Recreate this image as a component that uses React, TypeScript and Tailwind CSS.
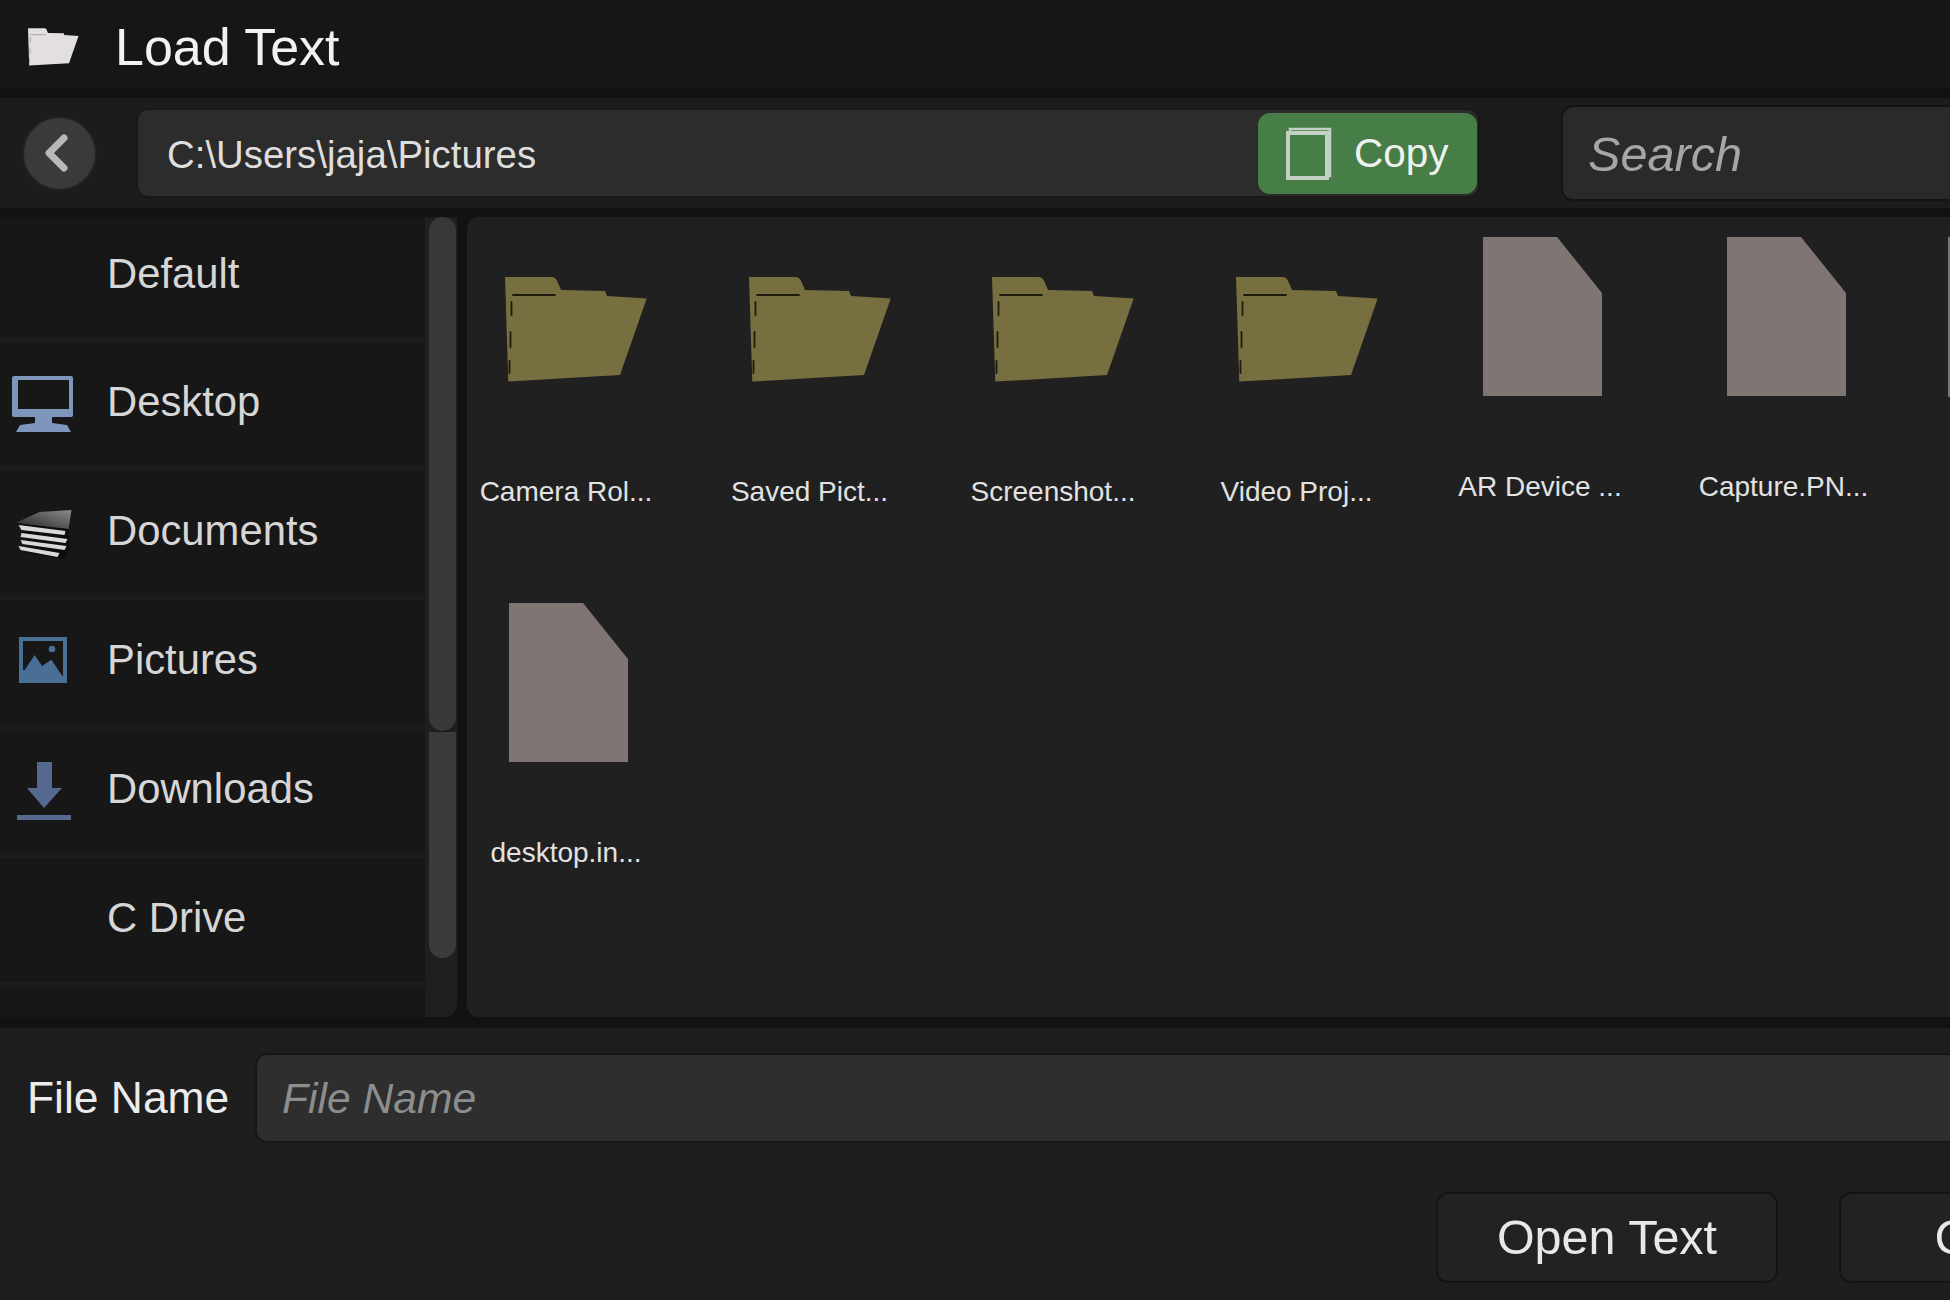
const places = [
  { name: 'Default', icon: null },
  { name: 'Desktop', icon: <DesktopIcon /> },
  { name: 'Documents', icon: <DocumentsIcon /> },
  { name: 'Pictures', icon: <PicturesIcon /> },
  { name: 'Downloads', icon: <DownloadsIcon /> },
  { name: 'C Drive', icon: null },
]

const files = [
  { name: 'Camera Rol...', kind: 'folder' },
  { name: 'Saved Pict...', kind: 'folder' },
  { name: 'Screenshot...', kind: 'folder' },
  { name: 'Video Proj...', kind: 'folder' },
  { name: 'AR Device ...', kind: 'doc' },
  { name: 'Capture.PN...', kind: 'doc' },
  { name: '', kind: 'wide' },
  { name: 'desktop.in...', kind: 'doc' },
]

function FolderShape({ fill, dash }: { fill: string; dash: string }) {
  return (
    <>
      <path d="M0 0H46.7C50 0 52 3 53 6L56 13L100 14L102 19L141.7 21.5L115 98L3.3 104.6Z" fill={fill} />
      <path d="M8 18H50M6.5 25V38M5.5 55V70M4.5 84V96" stroke={dash} strokeWidth="1.8" fill="none" strokeLinecap="round" />
    </>
  )
}

function FolderIcon() {
  return (
    <svg width="143" height="105" viewBox="0 0 143 105" className="ml-[38px] mt-[60px] block">
      <FolderShape fill="#786f41" dash="#1e1b0c" />
    </svg>
  )
}

function DocIcon() {
  return (
    <svg width="119" height="159" viewBox="0 0 119 159" className="ml-[42px] mt-[20px] block">
      <path d="M0 0H74L119 56V159H0Z" fill="#7f7674" />
    </svg>
  )
}

function DesktopIcon() {
  return (
    <svg width="61" height="56" viewBox="0 0 61 56" className="ml-[12px] mt-[3px]" fill="#7e96bb">
      <path fillRule="evenodd" d="M2 0H59A2 2 0 0 1 61 2V39A2 2 0 0 1 59 41H2A2 2 0 0 1 0 39V2A2 2 0 0 1 2 0ZM6 4V33H57V4Z" />
      <path d="M23 41H40V47L55 49L59 56H4L8 49L23 47Z" />
    </svg>
  )
}

function DocumentsIcon() {
  return (
    <svg width="62" height="50" viewBox="0 0 59 50" className="ml-[12px] mt-[5px]">
      <defs>
        <linearGradient id="stack-top" x1="0" y1="1" x2="1" y2="0">
          <stop offset="0" stopColor="#222222" />
          <stop offset="1" stopColor="#8c8c8c" />
        </linearGradient>
      </defs>
      <path d="M2 14L26 3L58 1L55 20L14 17Z" fill="url(#stack-top)" />
      <path d="M3 14L16 34L12 44L52 50L56 38L55 20Z" fill="#0d0d0d" />
      <path d="M5 16L52 22L51 26L8 21ZM8 24L54 30L52 34L7 28ZM7 31L53 37L51 41L9 35ZM5 37L46 44L44 48L7 41Z" fill="#d9d9d9" />
    </svg>
  )
}

function PicturesIcon() {
  return (
    <svg width="48" height="46" viewBox="0 0 48 46" className="ml-[19px]" fill="#4a6f96">
      <path fillRule="evenodd" d="M0 0H48V46H0ZM4 4V33H5.7L15.7 18L23 29L32.3 22.7L44 40V4Z" />
      <circle cx="33" cy="12" r="3.3" />
    </svg>
  )
}

function DownloadsIcon() {
  return (
    <svg width="54" height="58" viewBox="0 0 54 58" className="ml-[17px] mt-[4px]" fill="#55698f">
      <path d="M20 0H35V26H45L27 46L10 26H20Z" />
      <rect x="0" y="53" width="54" height="5" />
    </svg>
  )
}

function PlaceRow({ name, icon, first }: { name: string; icon: React.ReactNode; first: boolean }) {
  return (
    <div className={`relative flex items-center border-b-[5px] border-[#1c1c1c] text-[41.8px] text-[#d6d6d6] ${first ? 'h-[125px] pb-[6px]' : 'h-[129px] pb-[4px]'}`}>
      {icon && <span className="absolute left-0 flex items-center">{icon}</span>}
      <span className="ml-[107px]">{name}</span>
    </div>
  )
}

function FileCell({ name, kind }: { name: string; kind: string }) {
  return (
    <div className="h-[366px]">
      {kind === 'folder' && <FolderIcon />}
      {kind === 'doc' && <DocIcon />}
      {kind === 'wide' && <div className="ml-[20px] mt-[20px] h-[160px] w-[158px] bg-[#7f7674]" />}
      <div className={`text-center text-[28px] leading-[32px] text-[#e2e2e2] ${kind === 'folder' ? 'mt-[94px]' : 'mt-[75px]'}`}>{name}</div>
    </div>
  )
}

export default function App() {
  return (
    <div className="h-[1300px] w-[1950px] overflow-hidden bg-[#1e1e1e] font-['Liberation_Sans',sans-serif]">
      <div className="w-[2300px]">
        <header className="flex h-[98px] items-center border-b-[10px] border-[#111111] bg-[#161616] pl-[28px] pt-[5px]">
          <svg width="51" height="38" viewBox="0 0 143 105">
            <FolderShape fill="#e3dfdf" dash="#8a8686" />
          </svg>
          <h1 className="ml-[36px] text-[52px] font-normal text-[#f2f2f2]">Load Text</h1>
        </header>

        <div className="flex h-[119px] items-center border-b-[9px] border-[#121212] bg-[#1c1c1c] pl-[22px]">
          <button className="flex h-[75px] w-[75px] items-center justify-center rounded-full border-2 border-[#222222] bg-[#3a3a3a]">
            <svg width="24" height="38" viewBox="0 0 24 38" fill="none" stroke="#b8b8b8" strokeWidth="7" strokeLinecap="round" strokeLinejoin="round" className="-ml-[8px]">
              <path d="M20 4L5 19L20 34" />
            </svg>
          </button>
          <div className="ml-[39px] flex h-[90px] w-[1344px] items-center justify-between rounded-[12px] border-2 border-[#181818] bg-[#2c2c2c] pl-[29px] pr-[1px]">
            <span className="mt-[3px] text-[38.4px] text-[#dedede]">C:\Users\jaja\Pictures</span>
            <button className="flex h-[81px] w-[219px] items-center rounded-[12px] bg-[#477d46] pl-[28px] text-[40.5px] text-[#eef2ee]">
              <svg width="46" height="54" viewBox="0 0 46 54" fill="none" stroke="#c5d0c5">
                <path d="M4 6V3H44V50H42" strokeWidth="2.5" />
                <rect x="2" y="7" width="39" height="45" strokeWidth="4" />
              </svg>
              <span className="ml-[22px]">Copy</span>
            </button>
          </div>
          <input
            placeholder="Search"
            className="ml-[81px] h-[96px] w-[714px] rounded-[12px] border-2 border-[#141414] bg-[#2a2a2a] pl-[25px] pt-[2px] text-[48.6px] outline-none placeholder:italic placeholder:text-[#a6a6a6]"
          />
        </div>

        <main className="flex h-[811px] border-b-[11px] border-[#121212] bg-[#121212]">
          <aside className="flex w-[457px] rounded-br-[12px] bg-[#1f1f1f]">
            <div className="h-full w-[425px] bg-[#171717]">
              {places.map((p, i) => (
                <PlaceRow key={p.name} name={p.name} icon={p.icon} first={i === 0} />
              ))}
            </div>
            <div className="ml-[4px] flex h-[741px] w-[27px] flex-col">
              <div className="h-[515px] rounded-[14px] border-b border-[#161616] bg-[#383838]" />
              <div className="flex-1 rounded-b-[14px] bg-[#3b3b3b]" />
            </div>
          </aside>
          <section className="ml-[10px] flex-1 rounded-[12px] bg-[#202020]">
            <div className="grid grid-cols-[repeat(7,198px)] gap-x-[45.5px]">
              {files.map((f, i) => (
                <FileCell key={i} name={f.name} kind={f.kind} />
              ))}
            </div>
          </section>
        </main>

        <div className="mt-[25px] flex items-center pl-[27px] pr-[24px]">
          <label className="w-[228px] text-[44.4px] text-[#ececec]">File Name</label>
          <input
            placeholder="File Name"
            className="h-[90px] flex-1 rounded-[12px] border-2 border-[#171717] bg-[#2e2e2e] pl-[25px] text-[42.6px] outline-none placeholder:italic placeholder:text-[#8d8d8d]"
          />
        </div>

        <div className="mt-[49px] flex justify-end gap-[61px] pr-[119px]">
          <button className="h-[91px] w-[342px] rounded-[12px] border-2 border-[#141414] bg-[#222222] text-[48.5px] text-[#e8e8e8]">Open Text</button>
          <button className="h-[91px] w-[342px] rounded-[12px] border-2 border-[#141414] bg-[#222222] text-[48.5px] text-[#e8e8e8]">Cancel</button>
        </div>
      </div>
    </div>
  )
}
